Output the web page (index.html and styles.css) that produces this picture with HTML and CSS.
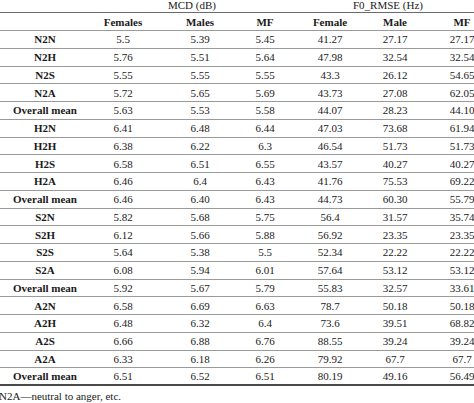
FILE: index.html
```html
<!DOCTYPE html>
<html>
<head>
<meta charset="utf-8">
<link rel="stylesheet" href="styles.css">
</head>
<body>
<div class="table">
  <div class="row group">
    <div class="cell"></div>
    <div class="cell g1">MCD (dB)</div>
    <div class="cell g2">F0_RMSE (Hz)</div>
  </div>
  <div class="row head">
    <div class="cell"></div>
    <div class="cell">Females</div>
    <div class="cell">Males</div>
    <div class="cell">MF</div>
    <div class="cell">Female</div>
    <div class="cell">Male</div>
    <div class="cell">MF</div>
  </div>
  <div class="row"><div class="cell lab">N2N</div><div class="cell">5.5</div><div class="cell">5.39</div><div class="cell">5.45</div><div class="cell">41.27</div><div class="cell">27.17</div><div class="cell">27.17</div></div>
  <div class="row"><div class="cell lab">N2H</div><div class="cell">5.76</div><div class="cell">5.51</div><div class="cell">5.64</div><div class="cell">47.98</div><div class="cell">32.54</div><div class="cell">32.54</div></div>
  <div class="row"><div class="cell lab">N2S</div><div class="cell">5.55</div><div class="cell">5.55</div><div class="cell">5.55</div><div class="cell">43.3</div><div class="cell">26.12</div><div class="cell">54.65</div></div>
  <div class="row"><div class="cell lab">N2A</div><div class="cell">5.72</div><div class="cell">5.65</div><div class="cell">5.69</div><div class="cell">43.73</div><div class="cell">27.08</div><div class="cell">62.05</div></div>
  <div class="row"><div class="cell lab">Overall mean</div><div class="cell">5.63</div><div class="cell">5.53</div><div class="cell">5.58</div><div class="cell">44.07</div><div class="cell">28.23</div><div class="cell">44.10</div></div>
  <div class="row"><div class="cell lab">H2N</div><div class="cell">6.41</div><div class="cell">6.48</div><div class="cell">6.44</div><div class="cell">47.03</div><div class="cell">73.68</div><div class="cell">61.94</div></div>
  <div class="row"><div class="cell lab">H2H</div><div class="cell">6.38</div><div class="cell">6.22</div><div class="cell">6.3</div><div class="cell">46.54</div><div class="cell">51.73</div><div class="cell">51.73</div></div>
  <div class="row"><div class="cell lab">H2S</div><div class="cell">6.58</div><div class="cell">6.51</div><div class="cell">6.55</div><div class="cell">43.57</div><div class="cell">40.27</div><div class="cell">40.27</div></div>
  <div class="row"><div class="cell lab">H2A</div><div class="cell">6.46</div><div class="cell">6.4</div><div class="cell">6.43</div><div class="cell">41.76</div><div class="cell">75.53</div><div class="cell">69.22</div></div>
  <div class="row"><div class="cell lab">Overall mean</div><div class="cell">6.46</div><div class="cell">6.40</div><div class="cell">6.43</div><div class="cell">44.73</div><div class="cell">60.30</div><div class="cell">55.79</div></div>
  <div class="row"><div class="cell lab">S2N</div><div class="cell">5.82</div><div class="cell">5.68</div><div class="cell">5.75</div><div class="cell">56.4</div><div class="cell">31.57</div><div class="cell">35.74</div></div>
  <div class="row"><div class="cell lab">S2H</div><div class="cell">6.12</div><div class="cell">5.66</div><div class="cell">5.88</div><div class="cell">56.92</div><div class="cell">23.35</div><div class="cell">23.35</div></div>
  <div class="row"><div class="cell lab">S2S</div><div class="cell">5.64</div><div class="cell">5.38</div><div class="cell">5.5</div><div class="cell">52.34</div><div class="cell">22.22</div><div class="cell">22.22</div></div>
  <div class="row"><div class="cell lab">S2A</div><div class="cell">6.08</div><div class="cell">5.94</div><div class="cell">6.01</div><div class="cell">57.64</div><div class="cell">53.12</div><div class="cell">53.12</div></div>
  <div class="row"><div class="cell lab">Overall mean</div><div class="cell">5.92</div><div class="cell">5.67</div><div class="cell">5.79</div><div class="cell">55.83</div><div class="cell">32.57</div><div class="cell">33.61</div></div>
  <div class="row"><div class="cell lab">A2N</div><div class="cell">6.58</div><div class="cell">6.69</div><div class="cell">6.63</div><div class="cell">78.7</div><div class="cell">50.18</div><div class="cell">50.18</div></div>
  <div class="row"><div class="cell lab">A2H</div><div class="cell">6.48</div><div class="cell">6.32</div><div class="cell">6.4</div><div class="cell">73.6</div><div class="cell">39.51</div><div class="cell">68.82</div></div>
  <div class="row"><div class="cell lab">A2S</div><div class="cell">6.66</div><div class="cell">6.88</div><div class="cell">6.76</div><div class="cell">88.55</div><div class="cell">39.24</div><div class="cell">39.24</div></div>
  <div class="row"><div class="cell lab">A2A</div><div class="cell">6.33</div><div class="cell">6.18</div><div class="cell">6.26</div><div class="cell">79.92</div><div class="cell">67.7</div><div class="cell">67.7</div></div>
  <div class="row last"><div class="cell lab">Overall mean</div><div class="cell">6.51</div><div class="cell">6.52</div><div class="cell">6.51</div><div class="cell">80.19</div><div class="cell">49.16</div><div class="cell">56.49</div></div>
</div>
<p class="note">N2A—neutral to anger, etc.</p>
</body>
</html>
```
FILE: styles.css
```css
html, body {
  margin: 0;
  padding: 0;
  background: #ffffff;
  overflow: hidden;
}
body {
  width: 474px;
  height: 403px;
  font-family: "Liberation Serif", "DejaVu Serif", serif;
  font-size: 11px;
  color: #1a1a1a;
}
.table {
  width: 508px;
}
.row {
  display: grid;
  grid-template-columns: 90px 66px 88px 42px 88px 42px 92px;
  height: 17.75px;
  box-sizing: border-box;
  border-bottom: 1.5px solid #9a9a9a;
  align-items: center;
}
.cell {
  text-align: center;
  white-space: nowrap;
  line-height: 14px;
}
.lab {
  font-weight: bold;
}
.group {
  height: 14px;
  margin-top: -1px;
  border-bottom: 1.5px solid #6a6a6a;
  grid-template-columns: 90px 196px 222px;
  align-items: start;
}
.group .cell {
  line-height: 12px;
}
.g1 {
  padding-left: 8px;
}
.g2 {
  padding-right: 18px;
}
.head {
  height: 18px;
  font-weight: bold;
}
.last {
  border-bottom: 2px solid #4a4a4a;
  height: 18px;
}
.note {
  margin: 0;
  padding-top: 3px;
  line-height: 14px;
  margin-left: -1px;
}
```
